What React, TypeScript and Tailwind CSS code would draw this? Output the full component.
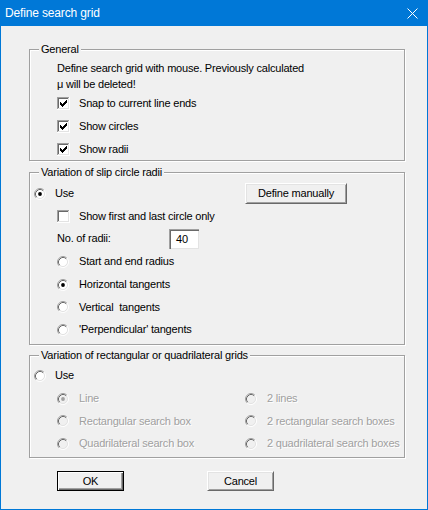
import React from "react";

const FACE = "#f0f0f0";

function CheckBox({ checked }: { checked?: boolean }) {
  // classic sunken 13x13 box with the pixel check mark
  const mark: [number, number, number][] = [
    [0, 6, 1],
    [1, 5, 2],
    [2, 0, 1],
    [2, 4, 3],
    [3, 0, 2],
    [3, 3, 3],
    [4, 0, 5],
    [5, 1, 3],
    [6, 2, 1],
  ];
  return (
    <svg width="13" height="13" viewBox="0 0 13 13" shapeRendering="crispEdges" className="shrink-0">
      <rect x="0" y="0" width="13" height="13" fill="#fff" />
      <rect x="0" y="0" width="12" height="1" fill="#a0a0a0" />
      <rect x="0" y="0" width="1" height="12" fill="#a0a0a0" />
      <rect x="1" y="1" width="10" height="1" fill="#696969" />
      <rect x="1" y="1" width="1" height="10" fill="#696969" />
      <rect x="1" y="11" width="11" height="1" fill="#e3e3e3" />
      <rect x="11" y="1" width="1" height="11" fill="#e3e3e3" />
      {checked &&
        mark.map(([r, x, w], i) => <rect key={i} x={3 + x} y={3 + r} width={w} height="1" fill="#000" />)}
    </svg>
  );
}

function Radio({ checked, disabled }: { checked?: boolean; disabled?: boolean }) {
  return (
    <svg width="12" height="12" viewBox="0 0 12 12" className="shrink-0">
      <circle cx="6" cy="6" r="4.5" fill={disabled ? FACE : "#fff"} />
      <path d="M2.11 9.89 A5.5 5.5 0 0 1 9.89 2.11" stroke="#a0a0a0" fill="none" />
      <path d="M9.89 2.11 A5.5 5.5 0 0 1 2.11 9.89" stroke="#fff" fill="none" />
      <path d="M2.82 9.18 A4.5 4.5 0 0 1 9.18 2.82" stroke="#696969" fill="none" />
      <path d="M9.18 2.82 A4.5 4.5 0 0 1 2.82 9.18" stroke="#e3e3e3" fill="none" />
      {checked && <circle cx="6" cy="6" r="1.9" fill={disabled ? "#a0a0a0" : "#000"} />}
    </svg>
  );
}

function Group({ title, height, className, children }: { title: string; height: string; className?: string; children: React.ReactNode }) {
  return (
    <div
      className={`relative ml-[28px] w-[376px] border border-[#a0a0a0] shadow-[inset_1px_1px_0_#fff,1px_1px_0_#fff] ${height} ${className ?? ""}`}
    >
      <span className="absolute left-[9px] top-[-8px] px-[2px] bg-[#f0f0f0] leading-[14px] whitespace-nowrap">{title}</span>
      {children}
    </div>
  );
}

function Button({ label, isDefault, className }: { label: string; isDefault?: boolean; className?: string }) {
  return (
    <button
      className={`flex items-center justify-center bg-[#f0f0f0] text-black leading-none ${
        isDefault
          ? "border border-black shadow-[inset_1px_1px_0_#fff,inset_-1px_-1px_0_#696969,inset_-2px_-2px_0_#a0a0a0]"
          : "border-t border-l border-white border-r border-b border-r-[#696969] border-b-[#696969] shadow-[inset_1px_1px_0_#e3e3e3,inset_-1px_-1px_0_#a0a0a0]"
      } ${className ?? ""}`}
    >
      {label}
    </button>
  );
}

export default function App() {
  const dim = "text-[#a0a0a0] [text-shadow:1px_1px_0_#fff]";

  return (
    <div className="w-[428px] h-[510px] bg-[#0078d7] flex flex-col font-['Liberation_Sans',Arial,sans-serif] select-none">
      {/* title bar */}
      <div className="h-[26px] flex items-center pl-[5px] pr-[10px] text-white text-[12px] tracking-[-0.15px]">
        <span className="flex-1">Define search grid</span>
        <svg width="11" height="11" viewBox="0 0 11 11">
          <path d="M0.5 0.5 L10.5 10.5 M10.5 0.5 L0.5 10.5" stroke="#fff" strokeWidth="1" />
        </svg>
      </div>

      {/* client area */}
      <div className="flex-1 mx-[1px] mb-[1px] bg-[#f0f0f0] text-black text-[11px] tracking-[-0.2px] pt-[23px]">
        <Group title="General" height="h-[112px]" className="pt-[10px] pl-[27px]">
          <div className="leading-[16px]">Define search grid with mouse. Previously calculated</div>
          <div className="leading-[16px]">μ will be deleted!</div>
          {["Snap to current line ends", "Show circles", "Show radii"].map((t) => (
            <div key={t} className="h-[23px] flex items-center gap-[9px]">
              <CheckBox checked />
              <span>{t}</span>
            </div>
          ))}
        </Group>

        <Group title="Variation of slip circle radii" height="h-[173px]" className="mt-[11px] pt-[9px]">
          <div className="h-[23px] flex items-center pl-[4px] pr-[57px]">
            <Radio checked />
            <span className="ml-[9px]">Use</span>
            <Button label="Define manually" className="ml-auto w-[102px] h-[21px]" />
          </div>
          <div className="pl-[27px]">
            <div className="h-[22px] flex items-center gap-[9px]">
              <CheckBox />
              <span>Show first and last circle only</span>
            </div>
            <div className="h-[23px] flex items-center">
              <span className="w-[112px]">No. of radii:</span>
              <div className="w-[30px] h-[20px] bg-white border-t border-l border-[#a0a0a0] border-r-white border-b-white shadow-[inset_1px_1px_0_#696969,inset_-1px_-1px_0_#e3e3e3] pl-[6px] flex items-center">
                40
              </div>
            </div>
            {[
              ["Start and end radius", false, "h-[23px]"],
              ["Horizontal tangents", true, "h-[23px]"],
              ["Vertical  tangents", false, "h-[22px]"],
              ["'Perpendicular' tangents", false, "h-[23px]"],
            ].map(([t, c, h]) => (
              <div key={t as string} className={`${h} flex items-center gap-[10px]`}>
                <Radio checked={c as boolean} />
                <span className="whitespace-pre">{t as string}</span>
              </div>
            ))}
          </div>
        </Group>

        <Group title="Variation of rectangular or quadrilateral grids" height="h-[103px]" className="mt-[10px] pt-[8px]">
          <div className="h-[23px] flex items-center pl-[4px]">
            <Radio />
            <span className="ml-[9px]">Use</span>
          </div>
          <div className="pl-[27px] grid grid-cols-[188px_1fr]">
            {[
              ["Line", true, "2 lines", "h-[23px]"],
              ["Rectangular search box", false, "2 rectangular search boxes", "h-[22px]"],
              ["Quadrilateral search box", false, "2 quadrilateral search boxes", "h-[23px]"],
            ].map(([a, c, b, h]) => (
              <React.Fragment key={a as string}>
                <div className={`${h} flex items-center gap-[10px]`}>
                  <Radio disabled checked={c as boolean} />
                  <span className={dim}>{a as string}</span>
                </div>
                <div className={`${h} flex items-center gap-[10px]`}>
                  <Radio disabled />
                  <span className={dim}>{b as string}</span>
                </div>
              </React.Fragment>
            ))}
          </div>
        </Group>

        <div className="flex mt-[13px] ml-[56px] gap-[83px]">
          <Button label="OK" isDefault className="w-[67px] h-[20px]" />
          <Button label="Cancel" className="w-[67px] h-[20px]" />
        </div>
      </div>
    </div>
  );
}
